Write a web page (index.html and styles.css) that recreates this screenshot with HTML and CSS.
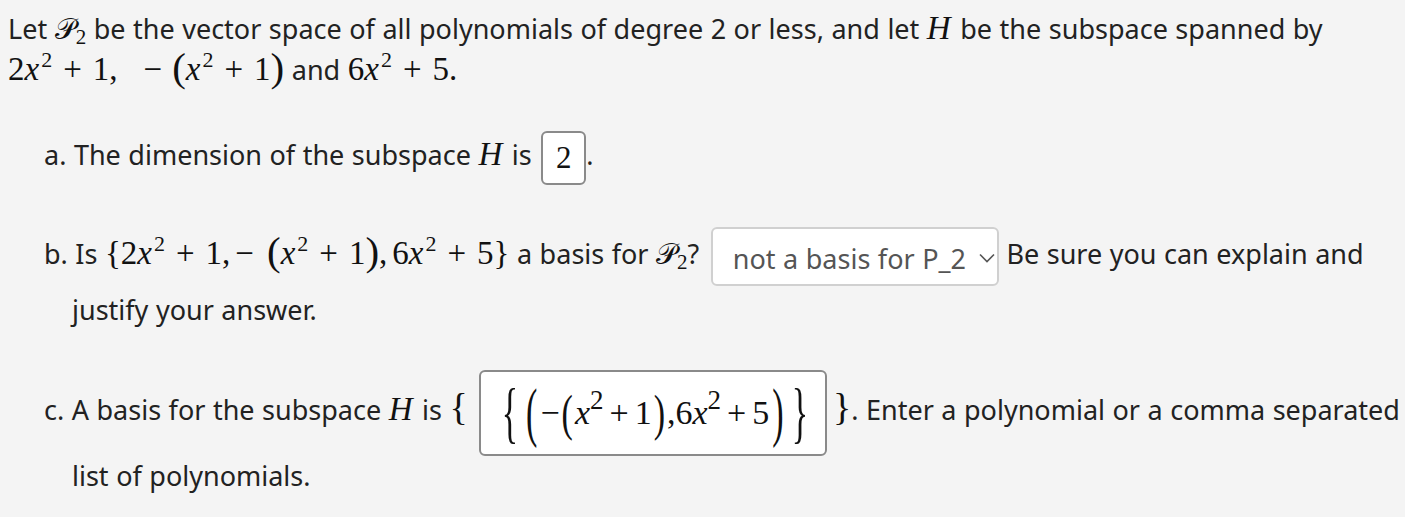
FILE: index.html
```html
<!DOCTYPE html>
<html>
<head>
<meta charset="utf-8">
<link rel="stylesheet" href="styles.css">
</head>
<body>
<div class="page">
  <p class="intro">Let <span class="m"><span class="cal">𝒫</span><sub class="sub">2</sub></span> be the vector space of all polynomials of degree 2 or less, and let <span class="m"><i>H</i></span> be the subspace spanned by<br><span class="m">2<i>x</i><sup>2</sup><span class="op">+</span>1,<span class="gap"></span>−<span class="bp bp-l">(</span><i>x</i><sup>2</sup><span class="op">+</span>1<span class="bp">)</span></span> and <span class="m">6<i>x</i><sup>2</sup><span class="op">+</span>5.</span></p>

  <p class="item item-a">a. The dimension of the subspace <span class="m"><i>H</i></span> is <span class="ans-a">2</span>.</p>

  <p class="item item-b">b. Is <span class="m">{2<i>x</i><sup>2</sup><span class="op">+</span>1,<span class="op0">−</span><span class="bp bp-l">(</span><i>x</i><sup>2</sup><span class="op">+</span>1<span class="bp">)</span>,<span class="thin"></span>6<i>x</i><sup>2</sup><span class="op">+</span>5}</span> a basis for <span class="m"><span class="cal">𝒫</span><sub class="sub">2</sub></span>? <span class="sel">not a basis for P_2<svg class="chev" width="18" height="12" viewBox="0 0 18 12"><path d="M2 2.5 L9 9.5 L16 2.5" fill="none" stroke="#555" stroke-width="1.6"/></svg></span> Be sure you can explain and<br>justify your answer.</p>

  <p class="item item-c">c. A basis for the subspace <span class="m"><i>H</i></span> is <span class="m brace">{</span><span class="ans-c"><span class="tb">{</span><span class="tp">(</span>−<span class="tp2">(</span><i>x</i><sup class="sup-c">2</sup><span class="opc">+</span>1<span class="tp2">)</span>,6<i>x</i><sup class="sup-c">2</sup><span class="opc">+</span>5<span class="tp">)</span><span class="tb">}</span></span><span class="m brace">}</span>. Enter a polynomial or a comma separated<br>list of polynomials.</p>
</div>
</body>
</html>
```
FILE: styles.css
```css
html, body {
  margin: 0;
  padding: 0;
  background: #f4f4f4;
}
body {
  padding: 8px;
  font-family: "Noto Sans", "Open Sans", sans-serif;
  font-size: 27px;
  word-spacing: 0.5px;
  color: #222;
}
p { margin: 0; white-space: nowrap; }
.intro {
  line-height: 40px;
}
.m {
  font-family: "Liberation Serif", "DejaVu Serif", serif;
  font-size: 33px;
  word-spacing: 0;
  color: #111;
}
.m i { font-style: italic; margin-right: 2px; }
.op { margin: 0 11px; }
.op0 { margin: 0 3px 0 5px; }
.gap { display: inline-block; width: 26px; }
.thin { display: inline-block; width: 5px; }
.cal {
  font-family: "DejaVu Sans", "Noto Sans", serif;
  font-style: normal;
  font-size: 29px;
}
.sub {
  font-size: 21px;
  vertical-align: -5px;
  line-height: 0;
}
sup {
  font-size: 22px;
  line-height: 0;
  vertical-align: 13px;
}
.bp {
  font-size: 41px;
  line-height: 0;
  display: inline-block;
  text-indent: 0;
  transform: translateY(1px);
}
.bp-l { margin-left: 10px; }
.item {
  padding-left: 64px;
  text-indent: -28px;
  line-height: 40px;
}
.item-a { margin-top: 41px; }
.ans-a {
  display: inline-block;
  text-indent: 0;
  box-sizing: border-box;
  width: 45px;
  height: 54px;
  line-height: 50px;
  text-align: center;
  vertical-align: middle;
  background: #fff;
  border: 2px solid #8a8a8a;
  border-radius: 6px;
  font-family: "Liberation Serif", serif;
  font-size: 31px;
  color: #111;
  margin-left: 2px;
}
.item-b { margin-top: 38px; }
.sel {
  display: inline-flex;
  align-items: center;
  text-indent: 0;
  box-sizing: border-box;
  height: 59px;
  padding: 4px 1px 0 20px;
  margin: 4px 0 4px 4px;
  vertical-align: middle;
  background: #fff;
  border: 2px solid #d0d0d0;
  border-radius: 6px;
  color: #555;
  gap: 12px;
  line-height: 1;
}
.chev { display: block; margin-top: -2px; }
.item-c { margin-top: 40px; }
.brace { font-size: 38px; }
.ans-c {
  display: inline-block;
  text-indent: 0;
  box-sizing: border-box;
  height: 86px;
  padding: 0 12px 0 16px;
  margin: 0 6px 0 11px;
  vertical-align: middle;
  background: #fff;
  border: 2px solid #8a8a8a;
  border-radius: 6px;
  font-family: "Liberation Serif", serif;
  font-size: 34px;
  word-spacing: 0;
  color: #111;
  line-height: 82px;
}
.ans-c i { margin-right: 0; }
.opc { margin: 0 6px; }
.sup-c { font-size: 27px; vertical-align: 15px; }
.tb, .tp, .tp2 {
  display: inline-block;
  line-height: 1;
  font-weight: 300;
}
.tb { transform: scale(1, 2.0); margin: 0 5px; }
.tp { transform: scale(1, 1.9); margin: 0 3px; }
.tp2 { transform: scale(1, 1.5); margin: 0 2px; }
```
